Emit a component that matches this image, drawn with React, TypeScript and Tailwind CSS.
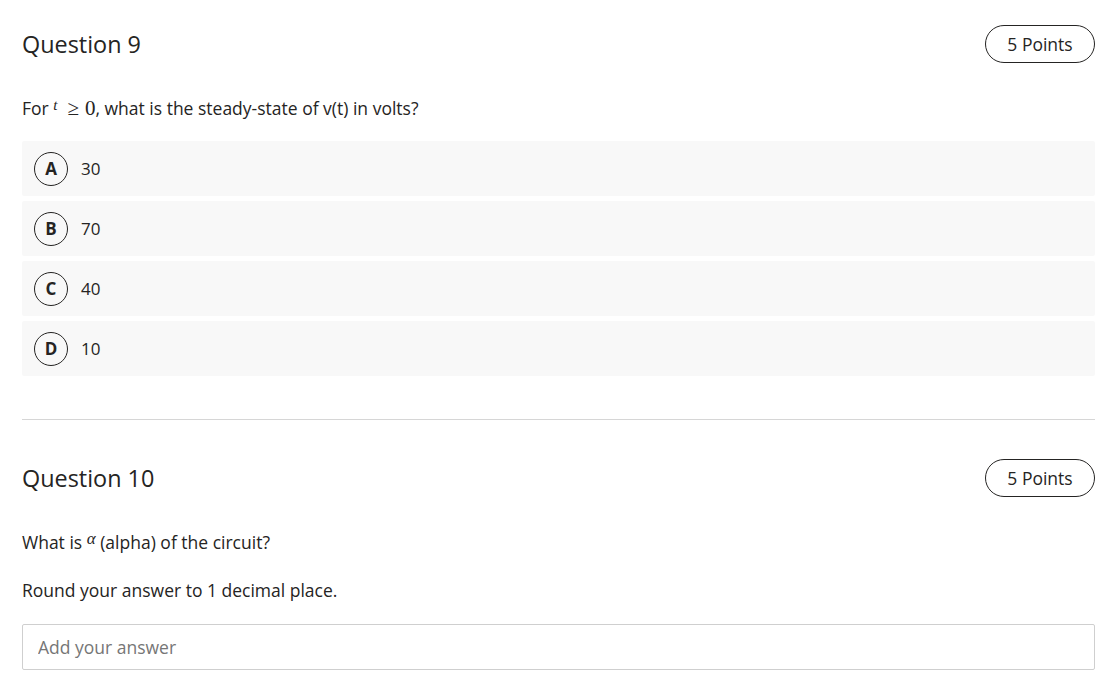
export default function App() {
  const options = [
    { letter: 'A', value: '30' },
    { letter: 'B', value: '70' },
    { letter: 'C', value: '40' },
    { letter: 'D', value: '10' },
  ];

  const serif = { fontFamily: '"Liberation Serif", serif' };

  return (
    <div className="min-h-screen bg-white pl-[22px] pr-[23px] text-[#252423]" style={{ fontFamily: '"Open Sans", sans-serif' }}>
      {/* Question 9 */}
      <div className="pt-[25px]">
        <div className="flex items-center justify-between">
          <h2 className="text-[23.4px] leading-[38px]">Question 9</h2>
          <span className="flex h-[38px] w-[110px] items-center justify-center rounded-full border border-[#252423] text-[17.5px]">
            5 Points
          </span>
        </div>
        <p className="mt-[33px] text-[17.5px] leading-[24px]">
          For{' '}
          <span className="relative -top-[5px] text-[15px] italic" style={serif}>t</span>
          <span className="ml-[10px] text-[21px]" style={serif}>≥</span>
          <span className="ml-[6px] text-[21px]" style={serif}>0</span>, what is the steady-state of v(t) in volts?
        </p>
        <div className="mt-[19px] flex flex-col gap-[5px]">
          {options.map((o) => (
            <div key={o.letter} className="flex h-[55px] items-center rounded-[2px] bg-[#f8f8f8] pl-[12px]">
              <span className="flex h-[34px] w-[34px] items-center justify-center rounded-full border-[1.5px] border-[#252423] text-[17px] font-bold">
                {o.letter}
              </span>
              <span className="ml-[13px] text-[17px]">{o.value}</span>
            </div>
          ))}
        </div>
      </div>

      <div className="mt-[43px] h-px bg-[#d6d6d6]" />

      {/* Question 10 */}
      <div className="pt-[39px]">
        <div className="flex items-center justify-between">
          <h2 className="text-[23.4px] leading-[38px]">Question 10</h2>
          <span className="flex h-[38px] w-[110px] items-center justify-center rounded-full border border-[#252423] text-[17.5px]">
            5 Points
          </span>
        </div>
        <p className="mt-[33px] text-[17.5px] leading-[24px]">
          What is{' '}
          <span className="relative -top-[5px] text-[17px] italic" style={serif}>α</span>{' '}
          (alpha) of the circuit?
        </p>
        <p className="mt-[22px] text-[17.5px] leading-[24px]">Round your answer to 1 decimal place.</p>
        <input
          className="mt-[22px] block h-[46px] w-full rounded-[2px] border border-[#cfcfcf] px-[15px] text-[17.5px] outline-none placeholder:text-[#767676]"
          placeholder="Add your answer"
        />
      </div>
    </div>
  );
}
